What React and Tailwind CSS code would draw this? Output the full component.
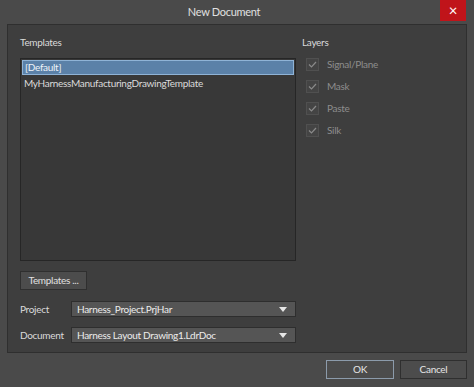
import React from 'react';

const layers = ['Signal/Plane', 'Mask', 'Paste', 'Silk'];

const Caret = () => (
  <svg width="8" height="5" viewBox="0 0 8 5" className="mr-2">
    <path d="M0 0 L8 0 L4 5 Z" fill="#e6e6e6" />
  </svg>
);

const Select = ({ value }) => (
  <div className="flex h-[16px] flex-1 items-center justify-between border border-[#2e2e2e] bg-[#555555] pl-[5px] text-[#ececec]">
    <span>{value}</span>
    <Caret />
  </div>
);

const App = () => {
  return (
    <div
      className="flex h-[387px] w-[474px] flex-col bg-[#4a4a4a] text-[10px] tracking-[-0.3px] text-[#dadada]"
      style={{ fontFamily: 'Lato, "Open Sans", sans-serif' }}
    >
      {/* title bar */}
      <div className="relative flex h-[24px] items-center justify-center pr-[26px]">
        <span className="text-[11px] text-[#e0e0e0]">New Document</span>
        <div className="absolute right-[8px] top-0 flex h-[21px] w-[26px] items-center justify-center bg-[#c0141a] text-[15px] leading-none text-white">
          ×
        </div>
      </div>

      {/* body panel */}
      <div className="mx-[7px] flex h-[329px] flex-col border border-[#2f2f2f] bg-[#3e3e3e] px-[12px]">
        <div className="flex gap-[6px]">
          <div className="flex w-[276px] flex-col">
            <div className="mt-[9px] h-[16px] leading-[16px]">Templates</div>
            <div className="mt-[8px] h-[203px] border border-[#262626] bg-[#383838] pt-[1px]">
              <div className="mx-[1px] h-[15px] border border-[#8fb3d6] bg-[#5b81a8] pl-[2px] leading-[13px] text-[#eef3f8]">
                [Default]
              </div>
              <div className="pl-[3px] leading-[17px]">MyHarnessManufacturingDrawingTemplate</div>
            </div>
          </div>
          <div className="flex flex-1 flex-col">
            <div className="mt-[9px] h-[16px] leading-[16px]">Layers</div>
            <div className="mt-[8px] flex flex-col gap-[9px] pl-[4px]">
              {layers.map((l) => (
                <div key={l} className="flex h-[13px] items-center gap-[8px] text-[#8d8d8d]">
                  <div className="flex h-[13px] w-[13px] items-center justify-center border border-[#505050] bg-[#444444]">
                    <svg width="9" height="7" viewBox="0 0 9 7">
                      <path d="M1 3.5 L3.5 6 L8 1" stroke="#8a8a8a" strokeWidth="1.2" fill="none" />
                    </svg>
                  </div>
                  <span>{l}</span>
                </div>
              ))}
            </div>
          </div>
        </div>

        <div className="mt-[10px] flex h-[19px] w-[67px] items-center justify-center border border-[#2f2f2f] bg-[#4c4c4c] text-[#e0e0e0]">
          Templates ...
        </div>

        <div className="mt-[11px] flex w-[276px] items-center">
          <span className="w-[51px]">Project</span>
          <Select value="Harness_Project.PrjHar" />
        </div>
        <div className="mt-[10px] flex w-[276px] items-center">
          <span className="w-[51px]">Document</span>
          <Select value="Harness Layout Drawing1.LdrDoc" />
        </div>
      </div>

      {/* footer */}
      <div className="mr-[7px] mt-[7px] flex justify-end gap-[6px]">
        <div className="flex h-[19px] w-[68px] items-center justify-center border border-[#8c9bab] bg-[#4c4c4c] text-[#e6e6e6]">
          OK
        </div>
        <div className="flex h-[19px] w-[67px] items-center justify-center border border-[#2f2f2f] bg-[#4c4c4c] text-[#e6e6e6]">
          Cancel
        </div>
      </div>
    </div>
  );
};

export default App;
